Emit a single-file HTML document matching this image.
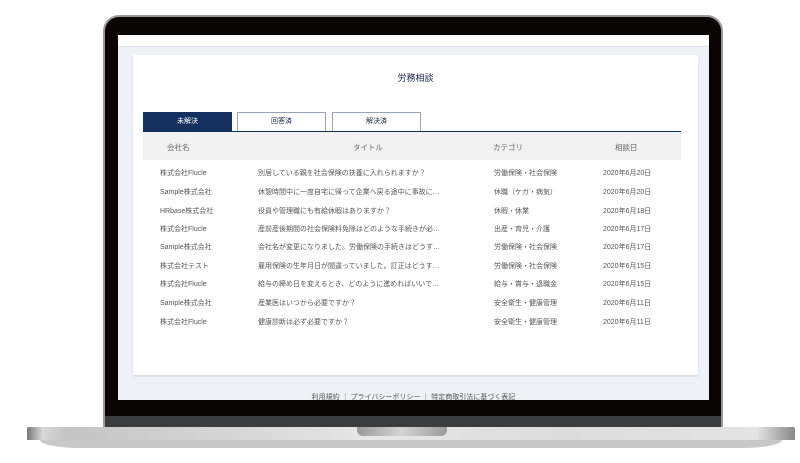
<!DOCTYPE html>
<html><head><meta charset="utf-8"><style>
*{margin:0;padding:0;box-sizing:border-box}
body{width:800px;height:463px;background:#fff;position:relative;overflow:hidden;font-family:"Liberation Sans","Noto Sans CJK JP",sans-serif}
.lid{position:absolute;left:103px;top:15px;width:620px;height:413px;background:#0a0606;border-radius:16px 16px 0 0;border:2px solid #9a9a9a;border-bottom:none}
.gray{position:absolute;left:105px;top:416px;width:616px;height:12px;background:#3b3c3e}
.screen{position:absolute;left:118px;top:35px;width:591px;height:365px;background:#eef2f6;overflow:hidden}
.topbar{position:absolute;left:0;top:0;width:100%;height:12px;background:#fff;border-bottom:1px solid #dde2e8}
.card{position:absolute;left:15px;top:20px;width:565px;height:320px;background:#fff;box-shadow:0 1px 2px rgba(0,0,0,.12)}
.title{position:absolute;top:16px;width:100%;text-align:center;font-size:9px;color:#1b2c4f}
.tab{position:absolute;top:57px;height:19px;width:89px;border:1px solid #9aa4b6;border-bottom:none;font-size:7px;text-align:center;line-height:18px;color:#1b2c4f;background:#fff}
.tab.on{background:#13305e;color:#fff;border-color:#13305e}
.line{position:absolute;left:10px;top:76px;width:538px;height:1.5px;background:#13305e}
.head{position:absolute;left:10px;top:77px;width:538px;height:28px;background:#f2f2f2;font-size:7.5px;color:#666}
.head span,.row span{position:absolute;white-space:nowrap}
.row{position:absolute;left:10px;width:538px;font-size:7px;color:#555;height:10px}
.foot{position:absolute;left:0;top:357px;width:100%;text-align:center;font-size:7px;color:#555}
.base{position:absolute;left:27px;top:427px;width:768px;height:13px;background:linear-gradient(90deg,#777 0,#d8d8d8 2%,#c4c4c4 5%,#e6e6e6 45%,#dcdcdc 70%,#e4e4e4 95%,#888 100%);border-radius:2px 2px 0 0}
.base2{position:absolute;left:40px;top:440px;width:742px;height:8px;background:#c8c8c8;border-radius:0 0 40px 40px/0 0 8px 8px}
.notch{position:absolute;left:357px;top:427px;width:90px;height:9px;background:linear-gradient(90deg,#9a9a9a,#d4d4d4 50%,#9a9a9a);border-radius:0 0 6px 6px}
</style></head><body>
<div class="lid"></div>
<div class="gray"></div>
<div class="screen">
<div class="topbar"></div>
<div class="card">
<div class="title">労務相談</div>
<div class="tab on" style="left:10px">未解決</div>
<div class="tab" style="left:104px">回答済</div>
<div class="tab" style="left:199px">解決済</div>
<div class="line"></div>
<div class="head">
<span style="left:24px;top:10px">会社名</span>
<span style="left:210px;top:10px">タイトル</span>
<span style="left:350px;top:10px">カテゴリ</span>
<span style="left:472px;top:10px">相談日</span>
</div>
<div class="row" style="top:113px"><span style="left:17px">株式会社Flucle</span><span style="left:115px">別居している親を社会保険の扶養に入れられますか？</span><span style="left:351px">労働保険・社会保険</span><span style="left:460px">2020年6月20日</span></div>
<div class="row" style="top:132px"><span style="left:17px">Sample株式会社</span><span style="left:115px">休憩時間中に一度自宅に帰って企業へ戻る途中に事故に…</span><span style="left:351px">休職（ケガ・病気）</span><span style="left:460px">2020年6月20日</span></div>
<div class="row" style="top:151px"><span style="left:17px">HRbase株式会社</span><span style="left:115px">役員や管理職にも有給休暇はありますか？</span><span style="left:351px">休暇・休業</span><span style="left:460px">2020年6月18日</span></div>
<div class="row" style="top:169px"><span style="left:17px">株式会社Flucle</span><span style="left:115px">産前産後期間の社会保険料免除はどのような手続きが必…</span><span style="left:351px">出産・育児・介護</span><span style="left:460px">2020年6月17日</span></div>
<div class="row" style="top:187px"><span style="left:17px">Sample株式会社</span><span style="left:115px">会社名が変更になりました。労働保険の手続きはどうす…</span><span style="left:351px">労働保険・社会保険</span><span style="left:460px">2020年6月17日</span></div>
<div class="row" style="top:206px"><span style="left:17px">株式会社テスト</span><span style="left:115px">雇用保険の生年月日が間違っていました。訂正はどうす…</span><span style="left:351px">労働保険・社会保険</span><span style="left:460px">2020年6月15日</span></div>
<div class="row" style="top:224px"><span style="left:17px">株式会社Flucle</span><span style="left:115px">給与の締め日を変えるとき、どのように進めればいいで…</span><span style="left:351px">給与・賞与・退職金</span><span style="left:460px">2020年6月15日</span></div>
<div class="row" style="top:243px"><span style="left:17px">Sample株式会社</span><span style="left:115px">産業医はいつから必要ですか？</span><span style="left:351px">安全衛生・健康管理</span><span style="left:460px">2020年6月11日</span></div>
<div class="row" style="top:262px"><span style="left:17px">株式会社Flucle</span><span style="left:115px">健康診断は必ず必要ですか？</span><span style="left:351px">安全衛生・健康管理</span><span style="left:460px">2020年6月11日</span></div>
</div>
<div class="foot">利用規約 ｜ プライバシーポリシー ｜ 特定商取引法に基づく表記</div>
</div>
<div class="base2"></div>
<div class="base"></div>
<div class="notch"></div>
</body></html>
